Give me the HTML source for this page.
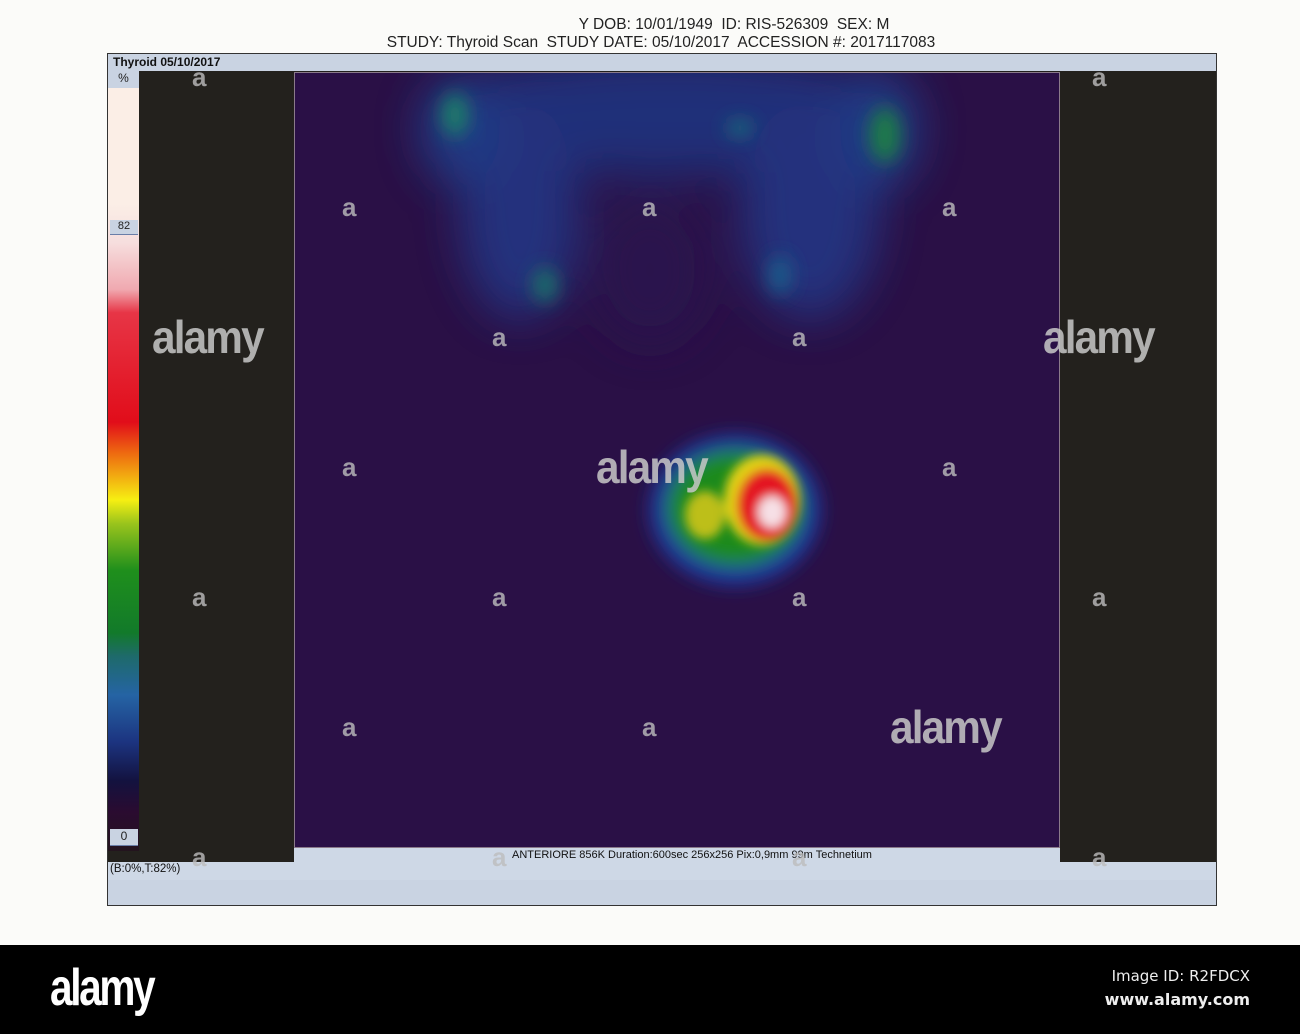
<!DOCTYPE html>
<html><head><meta charset="utf-8"><style>
*{margin:0;padding:0}
body{width:1300px;height:1034px;background:#fbfbf9;position:relative;overflow:hidden;font-family:"Liberation Sans",sans-serif}
.a{position:absolute}
.wm{position:absolute;color:#c8c8c8;font:bold 46px "Liberation Sans",sans-serif;letter-spacing:-2px;transform:scaleX(.92);transform-origin:left top;opacity:.85}
.sm{position:absolute;color:#bdbdbd;font:bold 26px "Liberation Sans",sans-serif;opacity:.8}
</style></head><body>
<div class="a" style="left:0;top:16px;width:1300px;text-align:center;font-size:15.5px;color:#222;line-height:18px">
<div style="padding-left:168px">Y DOB: 10/01/1949&nbsp; ID: RIS-526309&nbsp; SEX: M</div>
<div style="padding-left:22px">STUDY: Thyroid Scan&nbsp; STUDY DATE: 05/10/2017&nbsp; ACCESSION #: 2017117083</div>
</div>
<div class="a" style="left:107px;top:53px;width:1110px;height:853px;background:#c9d3e2;border:1px solid #333;box-sizing:border-box"></div>
<div class="a" style="left:113px;top:55px;font-size:12px;font-weight:bold;color:#111">Thyroid 05/10/2017</div>
<div class="a" style="left:108px;top:71px;width:1108px;height:791px;background:#23211d"></div>
<div class="a" style="left:108px;top:71px;width:31px;height:780px;background:linear-gradient(#fbeee6 0%,#fbeee6 17%,#f6dede 22%,#f0a9b0 28%,#e73546 31%,#e10d1a 45%,#ee6a10 49%,#f6ef12 55%,#9ac41c 58%,#1f8f1c 64%,#127a2a 72%,#1e6a6a 75%,#2564a4 80%,#1c3480 86%,#13123f 91%,#2a0b30 95%,#23141e 100%)"></div>
<div class="a" style="left:108px;top:71px;width:31px;height:17px;background:#c9d3e2;text-align:center;font-size:12px;color:#222">%</div>
<div class="a" style="left:110px;top:220px;width:28px;height:14px;background:#c9d3e2;text-align:center;font-size:11px;color:#222;border-bottom:1px solid #6a7ea8">82</div>
<div class="a" style="left:110px;top:829px;width:28px;height:16px;background:#c9d3e2;text-align:center;font-size:12px;color:#222;border-bottom:1px solid #6a7ea8">0</div>
<div class="a" style="left:108px;top:862px;width:1108px;height:18px;background:#ced8e6"></div>
<div class="a" style="left:110px;top:863px;font-size:11.5px;color:#111">(B:0%,T:82%)</div>
<div class="a" style="left:294px;top:848px;width:766px;height:14px;background:#ced8e6;text-align:center;font-size:11px;color:#111;line-height:14px;padding-left:30px;box-sizing:border-box">ANTERIORE 856K Duration:600sec 256x256 Pix:0,9mm 99m Technetium</div>
<svg class="a" style="left:294px;top:72px" width="766" height="776" viewBox="294 72 766 776">
<defs>
<filter id="b1" x="-50%" y="-50%" width="200%" height="200%"><feGaussianBlur stdDeviation="22"/></filter>
<filter id="b2" x="-50%" y="-50%" width="200%" height="200%"><feGaussianBlur stdDeviation="9"/></filter>
<filter id="b3" x="-50%" y="-50%" width="200%" height="200%"><feGaussianBlur stdDeviation="5"/></filter>
</defs>
<rect x="294" y="72" width="766" height="776" fill="#2a1046"/>
<g filter="url(#b1)" opacity=".75">
<ellipse cx="670" cy="115" rx="250" ry="60" fill="#1f3a8a"/>
<ellipse cx="520" cy="210" rx="60" ry="110" fill="#203c90"/>
<ellipse cx="810" cy="210" rx="70" ry="110" fill="#203c90"/>
<ellipse cx="650" cy="270" rx="60" ry="75" fill="#2a1250"/>
<ellipse cx="880" cy="130" rx="40" ry="60" fill="#1f4a9a"/>
<ellipse cx="460" cy="130" rx="40" ry="55" fill="#1f4a9a"/>
</g>
<g filter="url(#b2)">
<ellipse cx="455" cy="115" rx="14" ry="22" fill="#1d7a6a"/>
<ellipse cx="885" cy="135" rx="16" ry="28" fill="#1c7a4a"/>
<ellipse cx="545" cy="285" rx="13" ry="18" fill="#1d6a6a"/>
<ellipse cx="740" cy="128" rx="14" ry="8" fill="#1d6a7a"/>
<ellipse cx="780" cy="275" rx="12" ry="20" fill="#1d5a8a"/>
</g>
<g filter="url(#b2)">
<ellipse cx="735" cy="510" rx="85" ry="75" fill="#1c3aa0"/>
<ellipse cx="735" cy="508" rx="68" ry="58" fill="#1f8a1c"/>
</g>
<g filter="url(#b3)">
<ellipse cx="705" cy="515" rx="20" ry="24" fill="#d9c819" opacity=".85"/>
<ellipse cx="762" cy="500" rx="38" ry="45" fill="#e2d018"/>
<ellipse cx="767" cy="505" rx="30" ry="36" fill="#e41520"/>
<ellipse cx="772" cy="512" rx="14" ry="16" fill="#f6e0e6"/>
</g>
</svg>
<div class="a" style="left:294px;top:72px;width:766px;height:776px;border:1px solid #8a7a8a;box-sizing:border-box"></div>
<div class="wm" style="left:152px;top:310px">alamy</div>
<div class="wm" style="left:1043px;top:310px">alamy</div>
<div class="wm" style="left:596px;top:440px">alamy</div>
<div class="wm" style="left:890px;top:700px">alamy</div>
<div class="sm" style="left:192px;top:62px">a</div><div class="sm" style="left:1092px;top:62px">a</div>
<div class="sm" style="left:342px;top:192px">a</div><div class="sm" style="left:642px;top:192px">a</div><div class="sm" style="left:942px;top:192px">a</div>
<div class="sm" style="left:492px;top:322px">a</div><div class="sm" style="left:792px;top:322px">a</div>
<div class="sm" style="left:342px;top:452px">a</div><div class="sm" style="left:942px;top:452px">a</div>
<div class="sm" style="left:192px;top:582px">a</div><div class="sm" style="left:492px;top:582px">a</div><div class="sm" style="left:792px;top:582px">a</div><div class="sm" style="left:1092px;top:582px">a</div>
<div class="sm" style="left:342px;top:712px">a</div><div class="sm" style="left:642px;top:712px">a</div>
<div class="sm" style="left:192px;top:842px">a</div><div class="sm" style="left:492px;top:842px">a</div><div class="sm" style="left:792px;top:842px">a</div><div class="sm" style="left:1092px;top:842px">a</div>
<div class="a" style="left:0;top:945px;width:1300px;height:89px;background:#000"></div>
<div class="a" style="left:50px;top:958px;color:#fff;font:bold 52px 'Liberation Sans',sans-serif;letter-spacing:-3px;transform:scaleX(.78);transform-origin:left top">alamy</div>
<div class="a" style="right:50px;top:967px;color:#eee;font-size:15px;text-align:right;font-family:'DejaVu Sans',sans-serif">Image ID: R2FDCX</div>
<div class="a" style="right:50px;top:990px;color:#eee;font-size:16px;font-weight:bold;text-align:right;font-family:'DejaVu Sans',sans-serif">www.alamy.com</div>
</body></html>
